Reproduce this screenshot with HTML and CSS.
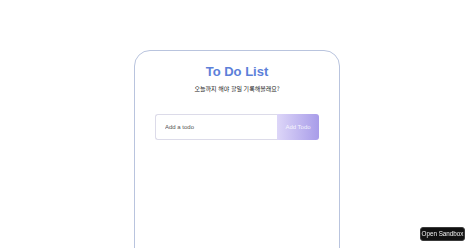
FILE: index.html
```html
<!DOCTYPE html>
<html lang="ko">
<head>
<meta charset="utf-8">
<title>To Do List</title>
<link rel="stylesheet" href="styles.css">
</head>
<body>
<main class="card">
  <h1 class="title">To Do List</h1>
  <p class="subtitle">오늘까지 해야 할일 기록해볼래요?</p>
  <form class="add-row">
    <input class="todo-input" type="text" placeholder="Add a todo" autofocus>
    <button class="add-btn" type="button">Add Todo</button>
  </form>
</main>
<a class="sandbox-btn" href="#">Open Sandbox</a>
</body>
</html>
```
FILE: styles.css
```css
html, body {
  margin: 0;
  padding: 0;
  background: #ffffff;
  height: 100%;
  overflow: hidden;
}
body {
  font-family: "Liberation Sans", Arial, "Noto Sans CJK KR", sans-serif;
  display: flex;
  justify-content: center;
}
.card {
  box-sizing: border-box;
  margin-top: 50px;
  width: 206px;
  height: 260px;
  border: 1px solid #b9c4de;
  border-radius: 16px;
  padding: 13px 20px 0 20px;
  display: flex;
  flex-direction: column;
  align-items: stretch;
}
.title {
  margin: 0;
  text-align: center;
  font-size: 13px;
  line-height: 16px;
  font-weight: bold;
  color: #5c80d9;
}
.subtitle {
  margin: 3px 0 0 0;
  text-align: center;
  font-family: "Noto Sans CJK KR", "Liberation Sans", sans-serif;
  font-size: 6px;
  line-height: 11px;
  color: #222222;
}
.add-row {
  margin: 20px 0 0 0;
  display: flex;
  height: 26px;
}
.todo-input {
  flex: 1;
  min-width: 0;
  box-sizing: border-box;
  height: 26px;
  margin: 0;
  border: 1px solid #dcdbe9;
  border-right: none;
  border-radius: 3px 0 0 3px;
  padding: 0 0 0 9px;
  font-family: "Liberation Sans", Arial, sans-serif;
  font-size: 6px;
  color: #333;
  outline: none;
  background: #fff;
}
.todo-input::placeholder {
  color: #555;
}
.add-btn {
  width: 42px;
  height: 26px;
  margin: 0;
  border: none;
  border-radius: 0 3px 3px 0;
  background: linear-gradient(to right, #ddd6f8, #a89ce9);
  color: rgba(255, 255, 255, 0.85);
  font-family: "Liberation Sans", Arial, sans-serif;
  font-size: 6px;
  padding: 0;
}
.sandbox-btn {
  position: fixed;
  right: 9px;
  bottom: 7px;
  box-sizing: border-box;
  width: 45px;
  height: 14px;
  border: 1px solid #3a3a3a;
  border-radius: 3px;
  background: #111111;
  color: #f2f2f2;
  font-family: "Liberation Sans", Arial, sans-serif;
  font-size: 6.3px;
  line-height: 12px;
  text-align: center;
  text-decoration: none;
}
```
